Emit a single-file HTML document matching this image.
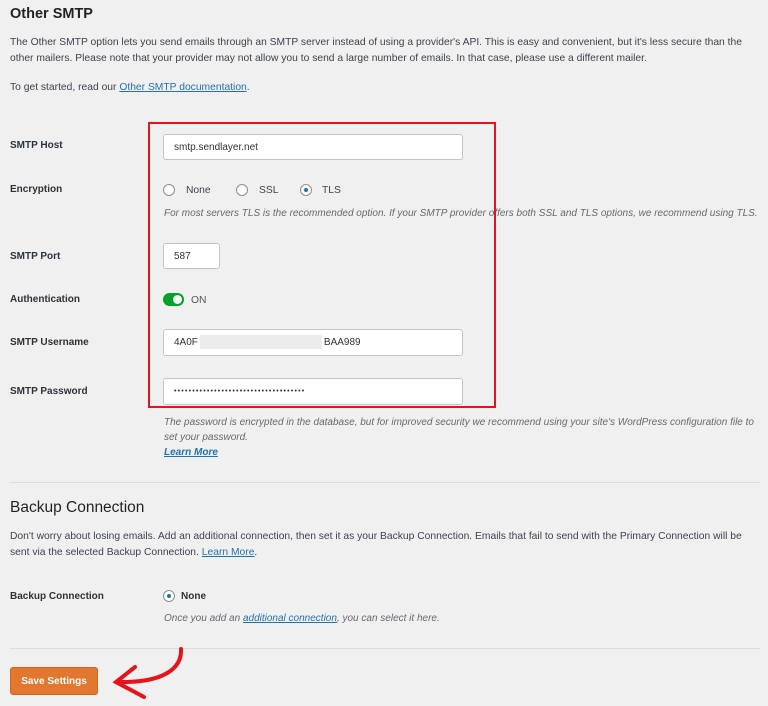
<!DOCTYPE html>
<html><head><meta charset="utf-8"><style>
body{margin:0;width:768px;height:706px;background:#f0f0f1;font-family:"Liberation Sans",sans-serif;color:#3c434a;position:relative;overflow:hidden;font-size:10.3px}
.a{position:absolute;white-space:nowrap}
.lbl{font-weight:bold;color:#2c3338;font-size:10px}
.in{position:absolute;background:#fff;border:1px solid #c3c4c7;border-radius:3px;box-sizing:border-box;font-size:10px;color:#2c3338;padding-left:10px;line-height:27px}
.desc{font-style:italic;color:#646970;font-size:10px}
a{color:#2271b1;text-decoration:underline}
.rad{position:absolute;width:12px;height:12px;border:1px solid #8c8f94;border-radius:50%;background:#fff;box-sizing:border-box}
.rad.on::after{content:"";position:absolute;left:3px;top:3px;width:4px;height:4px;border-radius:50%;background:#2271b1}
.hr{position:absolute;left:10px;right:8px;height:1px;background:#dcdcde}
</style></head><body>
<div class="a" style="left:10px;top:6px;font-size:14.5px;font-weight:bold;color:#1d2327">Other SMTP</div>
<div class="a" style="left:10px;top:35px;line-height:16px">The Other SMTP option lets you send emails through an SMTP server instead of using a provider's API. This is easy and convenient, but it's less secure than the<br>other mailers. Please note that your provider may not allow you to send a large number of emails. In that case, please use a different mailer.</div>
<div class="a" style="left:10px;top:82px">To get started, read our <a>Other SMTP documentation</a>.</div>

<div class="a lbl" style="left:10px;top:140px">SMTP Host</div>
<div class="in" style="left:163px;top:134px;width:300px;height:26px;line-height:25px">smtp.sendlayer.net</div>

<div class="a lbl" style="left:10px;top:184px">Encryption</div>
<div class="rad" style="left:163px;top:184px"></div><div class="a" style="left:186px;top:185px">None</div>
<div class="rad" style="left:236px;top:184px"></div><div class="a" style="left:259px;top:185px">SSL</div>
<div class="rad on" style="left:300px;top:184px"></div><div class="a" style="left:322px;top:185px">TLS</div>
<div class="a desc" style="left:164px;top:208px">For most servers TLS is the recommended option. If your SMTP provider offers both SSL and TLS options, we recommend using TLS.</div>

<div class="a lbl" style="left:10px;top:251px">SMTP Port</div>
<div class="in" style="left:163px;top:243px;width:57px;height:26px;line-height:25px">587</div>

<div class="a lbl" style="left:10px;top:294px">Authentication</div>
<div style="position:absolute;left:163px;top:293px;width:21px;height:13px;border-radius:7px;background:#00a32a"><div style="position:absolute;right:2px;top:2px;width:9px;height:9px;border-radius:50%;background:#fff"></div></div>
<div class="a" style="left:191px;top:295px;color:#50575e">ON</div>

<div class="a lbl" style="left:10px;top:337px">SMTP Username</div>
<div class="in" style="left:163px;top:329px;width:300px;height:27px;line-height:25px">4A0F<span style="display:inline-block;width:122px;height:14px;background:#ececec;vertical-align:middle;margin:0 2px"></span>BAA989</div>

<div class="a lbl" style="left:10px;top:386px">SMTP Password</div>
<div class="in" style="left:163px;top:378px;width:300px;height:27px;line-height:25px;font-size:7px;letter-spacing:1.2px">••••••••••••••••••••••••••••••••••••</div>

<div style="position:absolute;left:148px;top:122px;width:348px;height:286px;border:2px solid #e5141b;box-sizing:border-box"></div>

<div class="a desc" style="left:164px;top:415px;line-height:15px">The password is encrypted in the database, but for improved security we recommend using your site's WordPress configuration file to<br>set your password.<br><a style="font-weight:bold">Learn More</a></div>

<div class="hr" style="top:482px"></div>
<div class="a" style="left:10px;top:499px;font-size:15.5px;color:#1d2327">Backup Connection</div>
<div class="a" style="left:10px;top:529px;line-height:16px">Don't worry about losing emails. Add an additional connection, then set it as your Backup Connection. Emails that fail to send with the Primary Connection will be<br>sent via the selected Backup Connection. <a>Learn More</a>.</div>

<div class="a lbl" style="left:10px;top:591px">Backup Connection</div>
<div class="rad on" style="left:163px;top:590px"></div><div class="a" style="left:181px;top:591px;font-weight:bold;color:#2c3338;font-size:10px">None</div>
<div class="a desc" style="left:164px;top:613px">Once you add an <a>additional connection</a>, you can select it here.</div>

<div class="hr" style="top:648px"></div>
<div style="position:absolute;left:10px;top:667px;width:88px;height:28px;background:#e27730;border:1px solid #cd6622;border-radius:3px;box-sizing:border-box;color:#fff;font-weight:bold;font-size:10px;line-height:28px;text-align:center">Save Settings</div>
<svg style="position:absolute;left:108px;top:645px" width="80" height="55" viewBox="0 0 80 55"><g fill="none" stroke="#e5141b" stroke-width="4" stroke-linecap="round"><path d="M73 4 C74 22 58 38 10 37"/><path d="M27 22 L8 37 L36 52"/></g></svg>
</body></html>
